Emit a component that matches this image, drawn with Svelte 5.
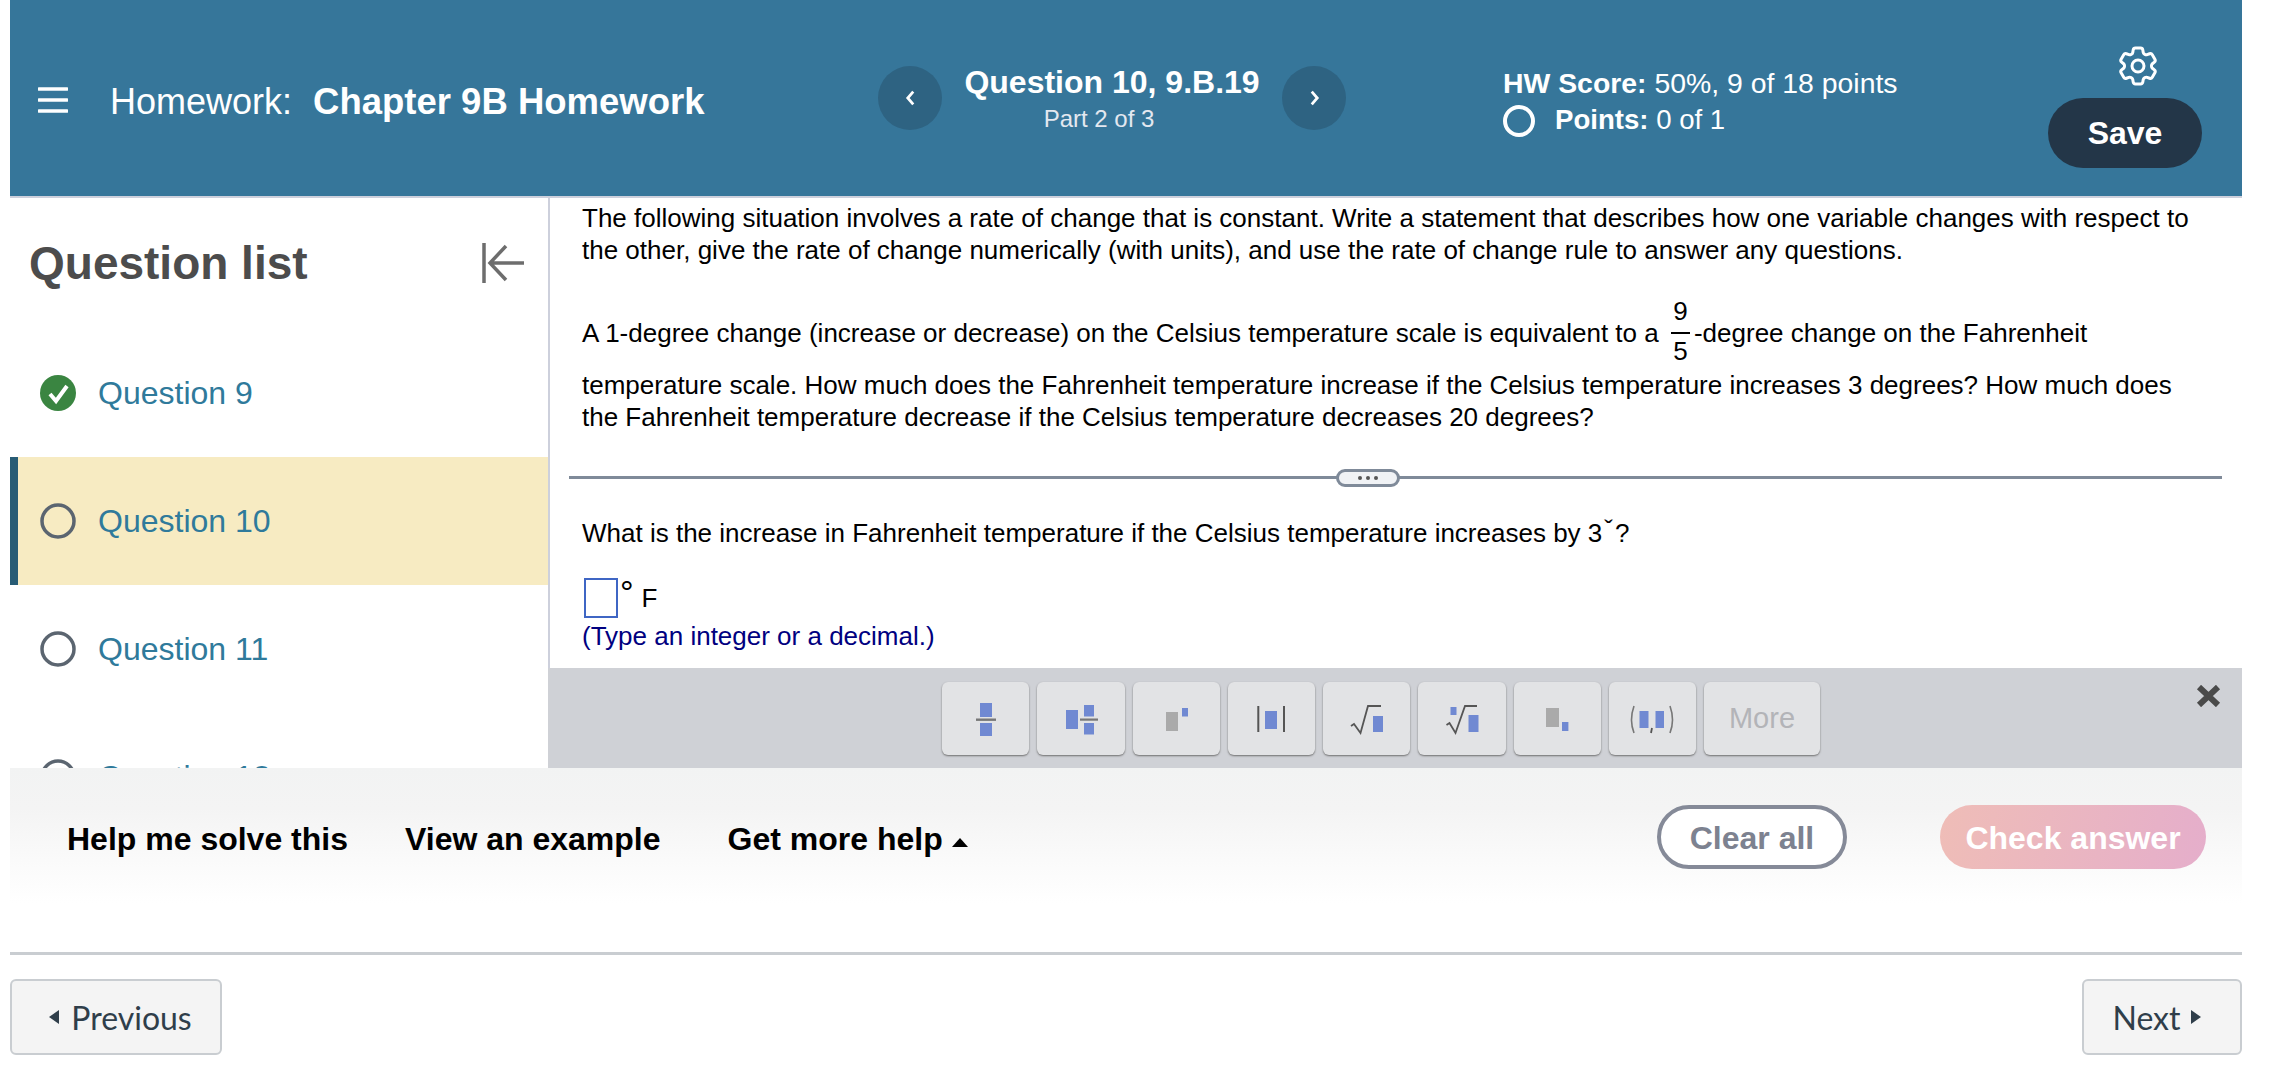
<script>
	const questions = [
		{ label: "Question 9", done: true },
		{ label: "Question 10", current: true },
		{ label: "Question 11" },
		{ label: "Question 12" },
	];
</script>

<div class="page">
	<header class="topbar">
		<svg class="burger" viewBox="0 0 30 26"><path d="M1 2h28M1 13h28M1 24h28" /></svg>
		<div class="title">Homework: <b>Chapter 9B Homework</b></div>
		<div class="nav">
			<button class="round" aria-label="Previous question">
				<svg viewBox="0 0 12 20"><path d="M9 3L3 10l6 7" /></svg>
			</button>
			<div class="nav-text">
				<div class="q-name">Question 10, 9.B.19</div>
				<div class="q-part">Part 2 of 3</div>
			</div>
			<button class="round" aria-label="Next question">
				<svg viewBox="0 0 12 20"><path d="M3 3l6 7-6 7" /></svg>
			</button>
		</div>
		<div class="score">
			<div class="score-row"><b>HW Score:</b> 50%, 9 of 18 points</div>
			<div class="score-row points">
				<span class="ring"></span>
				<span><b>Points:</b> 0 of 1</span>
			</div>
		</div>
		<div class="actions">
			<svg class="gear" viewBox="0 0 24 24">
				<path d="M9.594 3.94c.09-.542.56-.94 1.11-.94h2.593c.55 0 1.02.398 1.11.94l.213 1.281c.063.374.313.686.645.87.074.04.147.083.22.127.325.196.72.257 1.075.124l1.217-.456a1.125 1.125 0 0 1 1.37.49l1.296 2.247a1.125 1.125 0 0 1-.26 1.431l-1.003.827c-.293.241-.438.613-.43.992a7.723 7.723 0 0 1 0 .255c-.008.378.137.75.43.991l1.004.827c.424.35.534.955.26 1.43l-1.298 2.247a1.125 1.125 0 0 1-1.369.491l-1.217-.456c-.355-.133-.75-.072-1.076.124a6.47 6.47 0 0 1-.22.128c-.331.183-.581.495-.644.869l-.213 1.281c-.09.543-.56.94-1.11.94h-2.594c-.55 0-1.019-.398-1.11-.94l-.213-1.281c-.062-.374-.312-.686-.644-.87a6.52 6.52 0 0 1-.22-.127c-.325-.196-.72-.257-1.076-.124l-1.217.456a1.125 1.125 0 0 1-1.369-.49l-1.297-2.247a1.125 1.125 0 0 1 .26-1.431l1.004-.827c.292-.24.437-.613.43-.991a6.932 6.932 0 0 1 0-.255c.007-.38-.138-.751-.43-.992l-1.004-.827a1.125 1.125 0 0 1-.26-1.43l1.297-2.247a1.125 1.125 0 0 1 1.37-.491l1.216.456c.356.133.751.072 1.076-.124.072-.044.146-.086.22-.128.332-.183.582-.495.644-.869l.214-1.28Z" />
				<circle cx="12" cy="12" r="3" />
			</svg>
			<button class="save">Save</button>
		</div>
	</header>

	<div class="body">
		<aside class="sidebar">
			<div class="side-head">
				<h2>Question list</h2>
				<svg class="collapse" viewBox="0 0 44 40"><path d="M2 0v40M42 20H8M24 3L8 20l16 17" /></svg>
			</div>
			<ul>
				{#each questions as q}
					<li class:current={q.current}>
						{#if q.done}
							<svg class="status" viewBox="0 0 36 36">
								<circle cx="18" cy="18" r="18" fill="#3a8541" />
								<path d="M10 19l6 7 11-15" fill="none" stroke="#fff" stroke-width="4" />
							</svg>
						{:else}
							<svg class="status" viewBox="0 0 36 36">
								<circle cx="18" cy="18" r="16" fill="none" stroke="#5b6570" stroke-width="3.5" />
							</svg>
						{/if}
						<span>{q.label}</span>
					</li>
				{/each}
			</ul>
		</aside>

		<main class="main">
			<div class="question">
				<p class="intro">The following situation involves a rate of change that is constant. Write a statement that describes how one variable changes with respect to the other, give the rate of change numerically (with units), and use the rate of change rule to answer any questions.</p>
				<p class="problem">
					<span class="frac-line">A 1-degree change (increase or decrease) on the Celsius temperature scale is equivalent to a <span class="frac"><span class="num">9</span><span class="den">5</span></span>-degree change on the Fahrenheit</span>
					temperature scale. How much does the Fahrenheit temperature increase if the Celsius temperature increases 3 degrees? How much does the Fahrenheit temperature decrease if the Celsius temperature decreases 20 degrees?
				</p>
				<div class="divider"><span class="pill"><i></i><i></i><i></i></span></div>
				<p class="ask">What is the increase in Fahrenheit temperature if the Celsius temperature increases by 3<span class="caron">ˇ</span>?</p>
				<div class="answer"><span class="box"></span><span class="deg">°</span><span class="unit">F</span></div>
				<p class="hint">(Type an integer or a decimal.)</p>
			</div>

			<div class="keys">
				<button class="key" aria-label="fraction">
					<svg viewBox="0 0 40 40"><rect x="14" y="4" width="12" height="14" fill="#7089d2" /><rect x="10" y="19.5" width="20" height="2.4" fill="#777" /><rect x="14" y="24" width="12" height="13" fill="#7089d2" /></svg>
				</button>
				<button class="key" aria-label="mixed number">
					<svg viewBox="0 0 40 40"><rect x="5" y="11" width="12" height="19" fill="#7089d2" /><rect x="23" y="6" width="10" height="11.5" fill="#7089d2" /><rect x="19" y="19.5" width="18" height="2.2" fill="#777" /><rect x="23" y="24" width="10" height="11.5" fill="#7089d2" /></svg>
				</button>
				<button class="key" aria-label="exponent">
					<svg viewBox="0 0 40 40"><rect x="10" y="13" width="12" height="19" fill="#aaa" /><rect x="26" y="9" width="6" height="8.5" fill="#7089d2" /></svg>
				</button>
				<button class="key" aria-label="absolute value">
					<svg viewBox="0 0 40 40"><rect x="6.3" y="7" width="2" height="26" fill="#555" /><rect x="14" y="12" width="12" height="18" fill="#7089d2" /><rect x="32" y="7" width="2" height="26" fill="#555" /></svg>
				</button>
				<button class="key" aria-label="square root">
					<svg viewBox="0 0 40 40"><path d="M4 27l3-2 6.5 9L21 7h13" fill="none" stroke="#555" stroke-width="1.8" /><rect x="26" y="17" width="10" height="16" fill="#7089d2" /></svg>
				</button>
				<button class="key" aria-label="nth root">
					<svg viewBox="0 0 40 40"><rect x="8.5" y="8" width="6" height="8" fill="#7089d2" /><path d="M4.5 26l3-2 6 10L23 7h12" fill="none" stroke="#555" stroke-width="1.8" /><rect x="26.5" y="16" width="10" height="17" fill="#7089d2" /></svg>
				</button>
				<button class="key" aria-label="subscript">
					<svg viewBox="0 0 40 40"><rect x="9" y="9" width="13" height="19" fill="#aaa" /><rect x="25" y="23" width="6.4" height="9" fill="#7089d2" /></svg>
				</button>
				<button class="key" aria-label="ordered pair">
					<svg viewBox="0 0 40 40"><path d="M2 7q-5 14 0 27M38 7q5 14 0 27" fill="none" stroke="#777" stroke-width="1.6" /><rect x="7.5" y="12" width="9" height="17" fill="#7089d2" /><rect x="23.5" y="12" width="8.5" height="17" fill="#7089d2" /><path d="M20 29l-1 5" stroke="#555" stroke-width="1.8" /></svg>
				</button>
				<button class="key more">More</button>
				<svg class="close" viewBox="0 0 25 22"><path d="M3 2l19 18M22 2L3 20" /></svg>
			</div>
		</main>
	</div>

	<div class="helpbar">
		<a href="#help">Help me solve this</a>
		<a href="#example">View an example</a>
		<a href="#more">Get more help <span class="up"></span></a>
		<span class="spacer"></span>
		<button class="clear">Clear all</button>
		<button class="check">Check answer</button>
	</div>

	<footer class="pager">
		<button class="page-btn prev"><span class="tri left"></span>Previous</button>
		<button class="page-btn next">Next<span class="tri right"></span></button>
	</footer>
</div>

<style>
	:global(body) {
		margin: 0;
		background: #fff;
	}
	.page {
		width: 2289px;
		height: 1083px;
		padding: 0 47px 0 10px;
		box-sizing: border-box;
		font-family: "Liberation Sans", Arial, sans-serif;
		overflow: hidden;
	}
	button {
		font-family: inherit;
		cursor: pointer;
	}

	.topbar {
		height: 198px;
		box-sizing: border-box;
		border-bottom: 2px solid #cdd0dc;
		background: #36769a;
		color: #fff;
		display: flex;
		align-items: center;
	}
	.burger {
		width: 30px;
		height: 26px;
		margin: 4px 0 0 28px;
		flex: none;
	}
	.burger path {
		stroke: #fff;
		stroke-width: 3.5;
		stroke-linecap: round;
		fill: none;
	}
	.title {
		font-size: 36px;
		margin: 7px 0 0 42px;
		width: 768px;
		flex: none;
	}
	.title b {
		font-size: 36.5px;
		margin-left: 11px;
	}
	.nav {
		display: flex;
		align-items: center;
		width: 468px;
		flex: none;
	}
	.round {
		width: 64px;
		height: 64px;
		border: 0;
		border-radius: 50%;
		background: #2e6382;
		padding: 0;
		display: flex;
		align-items: center;
		justify-content: center;
		flex: none;
	}
	.round svg {
		width: 11px;
		height: 20px;
		fill: none;
		stroke: #fff;
		stroke-width: 3;
	}
	.nav-text {
		width: 340px;
		text-align: center;
	}
	.q-name {
		font-size: 32px;
		font-weight: 700;
	}
	.q-part {
		font-size: 24px;
		margin-top: 4px;
		color: #e3e8f0;
		padding-right: 26px;
	}
	.score {
		margin-left: 157px;
		width: 545px;
		font-size: 28.4px;
		flex: none;
		margin-top: 6px;
	}
	.score-row {
		line-height: 36px;
	}
	.points {
		display: flex;
		align-items: center;
		gap: 20px;
		margin-top: 1px;
		font-size: 27.6px;
	}
	.ring {
		width: 32px;
		height: 32px;
		box-sizing: border-box;
		border: 4px solid #fff;
		border-radius: 50%;
		margin-top: 3px;
	}
	.actions {
		width: 154px;
		height: 120px;
		margin-top: 20px;
		display: flex;
		flex-direction: column;
		align-items: center;
		justify-content: flex-end;
		flex: none;
	}
	.gear {
		width: 48px;
		height: 48px;
		fill: none;
		stroke: #fff;
		stroke-width: 1.5;
		margin: 0 0 8px 26px;
		flex: none;
	}
	.save {
		width: 154px;
		height: 70px;
		border: 0;
		border-radius: 35px;
		background: #233648;
		color: #fff;
		font-size: 32px;
		font-weight: 700;
		flex: none;
		padding-top: 2px;
	}

	.body {
		display: flex;
		height: 570px;
	}
	.sidebar {
		width: 538px;
		flex: none;
		overflow: hidden;
	}
	.side-head {
		height: 131px;
		display: flex;
		align-items: center;
		justify-content: space-between;
		padding: 0 22px 1px 19px;
		box-sizing: border-box;
	}
	h2 {
		margin: 0;
		font-size: 46px;
		font-weight: 700;
		color: #4c4c4c;
	}
	.collapse {
		width: 44px;
		height: 40px;
		fill: none;
		stroke: #6d6d6d;
		stroke-width: 3.5;
	}
	ul {
		list-style: none;
		margin: 0;
		padding: 0;
	}
	li {
		height: 128px;
		display: flex;
		align-items: center;
		gap: 22px;
		padding-left: 30px;
		box-sizing: border-box;
		color: #2f7a9b;
		font-size: 32px;
	}
	li.current {
		background: #f7ebc2;
		border-left: 8px solid #285c75;
		padding-left: 22px;
	}
	.status {
		width: 36px;
		height: 36px;
		flex: none;
	}

	.main {
		flex: 1;
		min-width: 0;
		border-left: 2px solid #cdd0dc;
		display: flex;
		flex-direction: column;
	}
	.question {
		flex: 1;
		min-height: 0;
		padding: 4px 42px 0 32px;
		font-size: 26px;
		line-height: 32px;
		color: #000;
	}
	p {
		margin: 0;
	}
	.problem {
		margin-top: 26px;
	}
	.frac-line {
		display: block;
		height: 85px;
		line-height: 82px;
		margin-bottom: -8px;
		white-space: nowrap;
	}
	.frac {
		display: inline-flex;
		flex-direction: column;
		vertical-align: middle;
		text-align: center;
		line-height: 30px;
		margin: -8px 4px 0 5px;
	}
	.num {
		border-bottom: 2px solid #000;
		padding: 0 2px 6px;
		margin-bottom: 2px;
		width: 19px;
		box-sizing: border-box;
	}
	.divider {
		height: 3px;
		margin: 43px 0 0 -13px;
		width: 1653px;
		background: #7f8a99;
		display: flex;
		align-items: center;
	}
	.pill {
		width: 64px;
		height: 18px;
		margin-left: 767px;
		box-sizing: border-box;
		border: 3px solid #7f8a99;
		border-radius: 9px;
		background: #f0f2f5;
		display: flex;
		gap: 4px;
		justify-content: center;
		align-items: center;
	}
	.pill i {
		width: 4px;
		height: 4px;
		border-radius: 50%;
		background: #555;
	}
	.ask {
		margin-top: 38px;
	}
	.caron {
		position: relative;
		top: -4px;
		margin: 0 2px;
	}
	.answer {
		display: flex;
		align-items: flex-start;
		margin: 29px 0 0 2px;
		height: 40px;
	}
	.box {
		width: 34px;
		height: 40px;
		box-sizing: border-box;
		border: 2px solid #3f66c4;
		flex: none;
	}
	.deg {
		font-size: 34px;
		margin: -2px 0 0 2px;
	}
	.unit {
		margin: 4px 0 0 8px;
	}
	.hint {
		color: #000080;
		margin-top: 2px;
	}

	.keys {
		height: 100px;
		flex: none;
		margin-left: -2px;
		background: #cfd1d6;
		display: flex;
		gap: 8px;
		align-items: flex-start;
		padding: 14px 0 0 394px;
		box-sizing: border-box;
		position: relative;
	}
	.key {
		width: 87.25px;
		height: 73px;
		box-sizing: border-box;
		border: 0;
		border-radius: 6px;
		background: #e2e3e5;
		box-shadow: 0 1px 2px #6f6f6f;
		padding: 0;
		display: flex;
		align-items: center;
		justify-content: center;
		flex: none;
	}
	.key svg {
		width: 40px;
		height: 40px;
		overflow: visible;
	}
	.key.more {
		width: 116px;
		color: #b3b4b8;
		font-size: 29px;
	}
	.close {
		position: absolute;
		left: 1648px;
		top: 17px;
		width: 25px;
		height: 22px;
		stroke: #4a4a4a;
		stroke-width: 6;
		fill: none;
	}

	.helpbar {
		height: 187px;
		box-sizing: border-box;
		border-bottom: 3px solid #c9cdd1;
		background: linear-gradient(#f2f3f3 0, #f4f4f4 40px, #fff 135px);
		display: flex;
		align-items: flex-start;
		padding: 37px 36px 0 57px;
		font-size: 32px;
		font-weight: 700;
	}
	.helpbar a {
		color: #000;
		text-decoration: none;
		margin: 2px 57px 0 0;
		line-height: 64px;
		white-space: nowrap;
	}
	.helpbar a:nth-child(2) {
		margin-right: 67px;
	}
	.up {
		display: inline-block;
		width: 0;
		height: 0;
		border: 8px solid transparent;
		border-top: 0;
		border-bottom: 9px solid #000;
		vertical-align: 3px;
	}
	.spacer {
		flex: 1;
	}
	.clear,
	.check {
		height: 64px;
		font-size: 32px;
		font-weight: 700;
		border-radius: 32px;
		padding: 2px 0 0;
		flex: none;
	}
	.clear {
		width: 190px;
		border: 4px solid #858a98;
		background: #fff;
		color: #7d8290;
		margin-right: 93px;
	}
	.check {
		width: 266px;
		border: 0;
		background: linear-gradient(100deg, #efbdb7, #e5aecb);
		color: #fff;
	}

	.pager {
		display: flex;
		justify-content: space-between;
		padding-top: 24px;
	}
	.page-btn {
		height: 76px;
		box-sizing: border-box;
		border: 2px solid #c9cdd1;
		border-radius: 6px;
		background: #f4f4f4;
		color: #2f3e4a;
		font-family: Lato, sans-serif;
		font-size: 32px;
		display: flex;
		align-items: center;
		justify-content: center;
	}
	.prev {
		width: 212px;
		gap: 12px;
		padding: 0 0 0 9px;
	}
	.next {
		width: 160px;
		gap: 10px;
		padding: 0 11px 0 0;
	}
	.tri {
		width: 0;
		height: 0;
		border-top: 7px solid transparent;
		border-bottom: 7px solid transparent;
	}
	.tri.left {
		border-right: 10px solid #2f3e4a;
	}
	.tri.right {
		border-left: 10px solid #2f3e4a;
	}
</style>
